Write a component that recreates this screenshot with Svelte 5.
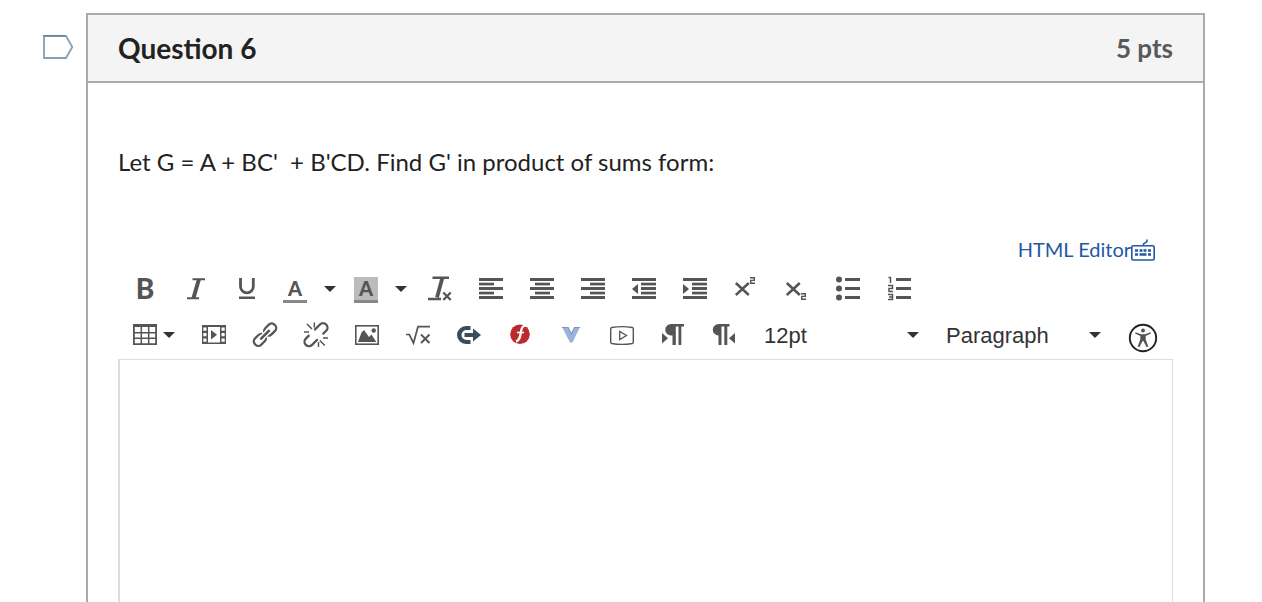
<script>
  let fontSize = $state('12pt');
  let block = $state('Paragraph');
  let answer = $state('');

  const aligners = [
    { name: 'Align left', bars: [[2, 24], [2, 15], [2, 24], [2, 15], [2, 24]] },
    { name: 'Align center', bars: [[2, 24], [7, 15], [2, 24], [7, 15], [2, 24]] },
    { name: 'Align right', bars: [[2, 24], [11, 15], [2, 24], [11, 15], [2, 24]] },
    { name: 'Decrease indent', bars: [[2, 24], [11, 15], [11, 15], [11, 15], [2, 24]], arrow: 'M8 9v10L2 14z' },
    { name: 'Increase indent', bars: [[2, 24], [11, 15], [11, 15], [11, 15], [2, 24]], arrow: 'M2 9v10l6-5z' }
  ];
  const barTop = [3, 7.700, 12, 16.700, 21];
  const barHeight = [3, 2.700, 3, 2.700, 3];
</script>

{#snippet caret()}
  <svg class="caret" viewBox="0 0 12 6" aria-hidden="true"><path d="M0 0h12L6 6z" /></svg>
{/snippet}

<main class="page">
  <button class="flag" aria-label="Flag question">
    <svg viewBox="0 0 30 24">
      <path d="M1 1h22l6.300 11-6.300 11H1z" fill="#fff" stroke="#86a0b6" stroke-width="1.8" />
      <path d="M0 .7h23" stroke="#66839c" stroke-width="1.4" />
    </svg>
  </button>

  <section class="card">
    <header class="card-head">
      <h1>Question 6</h1>
      <span class="points">5 pts</span>
    </header>

    <div class="card-body">
      <p class="prompt">Let G = A + BC'&nbsp; + B'CD. Find G' in product of sums form:</p>

      <div class="editor-links">
        <a href="#html">HTML Editor</a>
        <button class="keys" aria-label="Keyboard shortcuts">
          <svg viewBox="0 0 24 22">
            <g fill="none" stroke="#2457a3">
              <rect x=".8" y="6.800" width="22.400" height="14.200" rx="1.500" stroke-width="1.600" />
              <path d="M12.500 6.500V5l3.500-2.500V.5" stroke-width="1.500" />
              <path d="M4 11.500h3M8.500 11.500h3M12.500 11.500h3M17 11.500h3M4 15.500h3M8.500 15.500h7M17 15.500h3" stroke-width="2.600" />
            </g>
          </svg>
        </button>
      </div>

      <div class="toolbar">
        <div class="row">
          <button class="tool" aria-label="Bold">
            <svg viewBox="0 0 27 28"><text x="14" y="24" text-anchor="middle" class="heavy" font-size="28">B</text></svg>
          </button>
          <button class="tool" aria-label="Italic">
            <svg viewBox="0 0 27 28">
              <path d="M10.500 4.200H23M5 23.200h12" stroke-width="2" class="line" />
              <path d="M17 4L11.500 23" stroke-width="4" class="line" />
            </svg>
          </button>
          <button class="tool" aria-label="Underline">
            <svg viewBox="0 0 27 28">
              <path d="M7.500 3v8.500a6.400 6.400 0 0 0 12.800 0V3" stroke-width="2.800" class="line" />
              <path d="M6 21.500h16V24H6z" />
            </svg>
          </button>
          <button class="tool narrow" aria-label="Text color">
            <svg viewBox="0 0 27 28"><text x="14" y="21" text-anchor="middle" class="heavy" font-size="20">A</text><path d="M2 25h24v3H2z" fill="#888" /></svg>
          </button>
          <button class="more" aria-label="Text color choices">{@render caret()}</button>
          <button class="tool narrow" aria-label="Background color">
            <svg viewBox="0 0 27 28"><path d="M2 2h24v23H2z" fill="#bbb" /><text x="14" y="21" text-anchor="middle" class="heavy" font-size="20">A</text><path d="M2 25h24v3H2z" fill="#888" /></svg>
          </button>
          <button class="more" aria-label="Background color choices">{@render caret()}</button>
          <button class="tool" aria-label="Clear formatting">
            <svg viewBox="0 0 27 28">
              <path d="M6.500 2.800H23M2 24h13" stroke-width="2.600" class="line" />
              <path d="M16.300 3L11 22.500" stroke-width="3.800" class="line" />
              <path d="M17.300 17.500l7.400 7.500M24.700 17.500L17.300 25" stroke-width="2.300" class="line" />
            </svg>
          </button>
          {#each aligners as a}
            <button class="tool" aria-label={a.name}>
              <svg viewBox="0 0 27 28">
                {#each a.bars as [x, w], i}<rect {x} y={barTop[i]} width={w} height={barHeight[i]} />{/each}
                {#if a.arrow}<path d={a.arrow} />{/if}
              </svg>
            </button>
          {/each}
          <button class="tool" aria-label="Superscript">
            <svg viewBox="0 0 27 28">
              <path d="M3.800 8l13 12M16.800 8l-13 12" stroke-width="2.500" class="line" />
              <path d="M18 2.700h4.300v2.700h-3.600v2.900H23" stroke-width="1.400" class="line" />
            </svg>
          </button>
          <button class="tool" aria-label="Subscript">
            <svg viewBox="0 0 27 28">
              <path d="M3.800 8l13 12M16.800 8l-13 12" stroke-width="2.500" class="line" />
              <path d="M18 18.700h4.300v2.700h-3.600v2.900H23" stroke-width="1.400" class="line" />
            </svg>
          </button>
          <button class="tool" aria-label="Bullet list">
            <svg viewBox="0 0 27 28">
              <circle cx="5" cy="4.500" r="3" /><circle cx="5" cy="13.500" r="3" /><circle cx="5" cy="22.500" r="3" />
              <path d="M11 3h15v3H11zM11 12h15v3H11zM11 21h15v3H11z" />
            </svg>
          </button>
          <button class="tool" aria-label="Numbered list">
            <svg viewBox="0 0 27 28">
              <path d="M3.500 2.500h2V8M3 10.500h4.500v3H4v3h4M3 19.500h4.500v5H3M4 22h3.500" stroke-width="1.500" class="line" />
              <path d="M11 3h15v3H11zM11 12h15v3H11zM11 21h15v3H11z" />
            </svg>
          </button>
        </div>

        <div class="row">
          <button class="tool menu" aria-label="Table">
            <svg viewBox="0 0 27 28">
              <path d="M2 3h24v3H2z" />
              <path d="M10.300 5v18M17.700 5v18M3 11.700h22M3 17.300h22" stroke-width="1.500" class="line" />
              <path d="M2.900 4v19.200h22.200V4" stroke-width="1.800" class="line" />
            </svg>
            {@render caret()}
          </button>
          <button class="tool" aria-label="Record media">
            <svg viewBox="0 0 27 28">
              <path d="M2 4h24v19H2z" />
              <path d="M8 6h12v15.500H8zM3.300 6.500h3.200v3.200H3.300zM3.300 12h3.200v3.200H3.300zM3.300 17.500h3.200v3.200H3.300zM21.500 6.500h3.200v3.200h-3.200zM21.500 12h3.200v3.200h-3.200zM21.500 17.500h3.200v3.200h-3.200z" fill="#fff" />
              <path d="M11 9v9.500l6-4.800z" />
            </svg>
          </button>
          <button class="tool" aria-label="Insert link">
            <svg viewBox="0 0 27 28">
              <g transform="rotate(-45 14 13.700)" stroke-width="2.300" class="line">
                <rect x="14.800" y="9.300" width="13" height="8.800" rx="4" />
                <rect x=".2" y="9.300" width="13" height="8.800" rx="4" />
                <path class="halo" d="M9.500 13.700h9" stroke-width="5.500" />
                <path d="M8.500 13.700h11" stroke-width="2.600" stroke-linecap="round" />
              </g>
            </svg>
          </button>
          <button class="tool" aria-label="Remove link">
            <svg viewBox="0 0 27 28">
              <g transform="rotate(-45 14 13.700)" stroke-width="2.300" class="line">
                <path d="M16 9.300h8a4.400 4.400 0 0 1 0 8.800h-5" />
                <path d="M12 18.100H4a4.400 4.400 0 0 1 0-8.800h5" />
              </g>
              <path d="M5 3l5 5M12.300 1.500v5M2 11h5M22.800 24.500l-5-5M16.500 21v5M21 17h5" stroke-width="1.500" class="line" />
            </svg>
          </button>
          <button class="tool" aria-label="Insert image">
            <svg viewBox="0 0 27 28">
              <rect x="2.800" y="4.800" width="22.400" height="18.400" stroke-width="1.600" class="line" />
              <path d="M5 21l3.500-9.500L11 9l5 7 2.500-2.500L23 20.500v.5z" /><circle cx="20.700" cy="9.500" r="2.200" />
            </svg>
          </button>
          <button class="tool" aria-label="Insert math equation">
            <svg viewBox="0 0 27 28">
              <path d="M2 13.500h3.300l4.200 8.500L14 5.700h12" stroke-width="1.700" class="line" />
              <path d="M17 13.500l8.500 8.500M25.500 13.500L17 22" stroke-width="1.900" class="line" />
            </svg>
          </button>
          <button class="tool" aria-label="Commons resource">
            <svg viewBox="0 0 27 28">
              <g fill="#3a4d5c">
                <path d="M15.500 5H11a9 9 0 0 0 0 18h4.500v-4H11.500a5 5 0 0 1 0-10h4z" />
                <path d="M9.500 12H18V7.500l8 6.500-8 6.500V16H9.500z" />
              </g>
            </svg>
          </button>
          <button class="tool" aria-label="Flash media">
            <svg viewBox="0 0 27 28">
              <circle cx="14" cy="13.300" r="9.800" fill="#bb2a2c" />
              <path d="M21 4.800c-4.500-.8-5.500 2.200-6.200 6.700-.7 4.500-1.300 8.300-4.800 9" fill="none" stroke="#fff" stroke-width="2.300" />
              <path d="M11 11.500h7" fill="none" stroke="#fff" stroke-width="1.600" />
            </svg>
          </button>
          <button class="tool" aria-label="Video library">
            <svg viewBox="0 0 27 28">
              <path d="M5 6h6.300l3 6.500 3-6.500H23l-7.500 15.500h-2.500z" fill="#9ab3dc" />
              <path d="M4.800 6.500h6.300l3.200 6.500 3.200-6.500H23.200" fill="none" stroke="#8197bd" stroke-width="1.100" />
            </svg>
          </button>
          <button class="tool" aria-label="Embed video">
            <svg viewBox="0 0 27 28">
              <path d="M3.700 6.500Q14 4.700 24.300 6.500q1 .2 1 1.200v13.600q0 1-1 1.200Q14 24.300 3.700 22.500q-1-.2-1-1.200V7.700q0-1 1-1.200z" stroke-width="1.400" class="line" />
              <path d="M11.700 10.500v8l6.800-4z" stroke-width="1.300" class="line" />
            </svg>
          </button>
          <button class="tool" aria-label="Left to right">
            <svg viewBox="0 0 27 28"><path d="M12 3h13v2.500h-2.700V24H19.500V5.500h-2.700V24H13.500v-9.500H12A5.700 5.700 0 0 1 12 3zM3 12v10.500l6-5.200z" /></svg>
          </button>
          <button class="tool" aria-label="Right to left">
            <svg viewBox="0 0 27 28"><path d="M8.500 3h11v2.500h-2.200V24h-3V5.500h-2.800V24h-3v-9.500A5.700 5.700 0 0 1 8.500 3zM25 12v10.500l-6-5.200z" /></svg>
          </button>
          <label class="pick">
            <select aria-label="Font size" bind:value={fontSize}><option>12pt</option></select>
            {@render caret()}
          </label>
          <label class="pick">
            <select aria-label="Block format" bind:value={block}><option>Paragraph</option></select>
            {@render caret()}
          </label>
          <button class="check" aria-label="Check accessibility">
            <svg viewBox="0 0 30 30">
              <circle cx="15" cy="15" r="13.200" fill="#fff" stroke="#222" stroke-width="1.900" />
              <circle cx="15" cy="7.500" r="2" />
              <path d="M7.500 9.300l5.500 2h4l5.500-2 .4 1.200-5.200 2.600v3.400l2.600 7-1.700.7L15.400 18h-.8l-3.200 6.200-1.700-.7 2.600-7v-3.400l-5.200-2.600z" />
            </svg>
          </button>
        </div>
      </div>

      <textarea class="answer" aria-label="Answer" bind:value={answer}></textarea>
    </div>
  </section>
</main>

<style>
  :global(body) { background: #fff; }

  .page {
    box-sizing: border-box;
    height: 100vh;
    overflow: hidden;
    padding: 13px 57px 0 43px;
    display: grid;
    grid-template-columns: 30px minmax(0, 1fr);
    column-gap: 13px;
    align-items: start;
    font-family: Lato, "Liberation Sans", sans-serif;
    color: #222;
  }

  button {
    margin: 0;
    padding: 0;
    border: 0;
    background: none;
    display: flex;
    align-items: center;
    justify-content: center;
    cursor: pointer;
  }

  svg { display: block; flex: none; fill: #555; overflow: visible; }
  .line { fill: none; stroke: #555; }
  .halo { stroke: #fff; }
  .heavy { font-family: Lato, sans-serif; font-weight: 900; }

  .flag { padding-top: 22px; }
  .flag svg { width: 30px; height: 24px; }

  .card { border: 2px solid #aaa; }

  .card-head {
    display: flex;
    align-items: center;
    justify-content: space-between;
    padding: 16px 30px;
    line-height: 34px;
    background: #f4f4f4;
    border-bottom: 2px solid #aaa;
  }
  h1 { margin: 0; font-size: 28px; font-weight: 700; }
  .points { font-size: 26px; font-weight: 700; color: #595959; }

  .card-body { padding: 61px 30px 0; }

  .prompt { margin: 0; font-size: 24px; line-height: 36px; }

  .editor-links {
    display: flex;
    justify-content: flex-end;
    align-items: center;
    padding: 54px 18px 0 0;
    height: 30px;
    font-size: 20px;
  }
  .editor-links a { color: #2457a3; text-decoration: none; }
  .keys { padding-top: 2px; }
  .keys svg { width: 24px; height: 22px; }

  .toolbar { padding: 2px 0 1px 1px; }
  .row { display: flex; height: 46px; }
  .tool { width: 51px; }
  .tool svg { width: 27px; height: 28px; }
  .narrow { width: 45px; }
  .more { width: 26px; }
  .menu { width: 69px; gap: 5px; justify-content: flex-start; padding-left: 12px; box-sizing: border-box; }

  .caret,
  .tool .caret { width: 12px; height: 6px; fill: #333; }

  .pick { flex: 1; display: flex; align-items: center; padding-right: 12px; }
  select {
    flex: 1;
    min-width: 0;
    height: 36px;
    margin: 0;
    padding: 0 0 0 15px;
    border: 0;
    appearance: none;
    background: none;
    color: #333;
    font: 22px "Liberation Sans", sans-serif;
  }

  .check { width: 60px; align-items: flex-end; padding-bottom: 5px; }
  .check svg { width: 30px; height: 30px; }

  .answer {
    display: block;
    box-sizing: border-box;
    width: 100%;
    height: 300px;
    padding: 12px;
    border: 1px solid #ddd;
    border-left-width: 2px;
    resize: none;
    outline: 0;
    font: 24px Lato, sans-serif;
  }
</style>
